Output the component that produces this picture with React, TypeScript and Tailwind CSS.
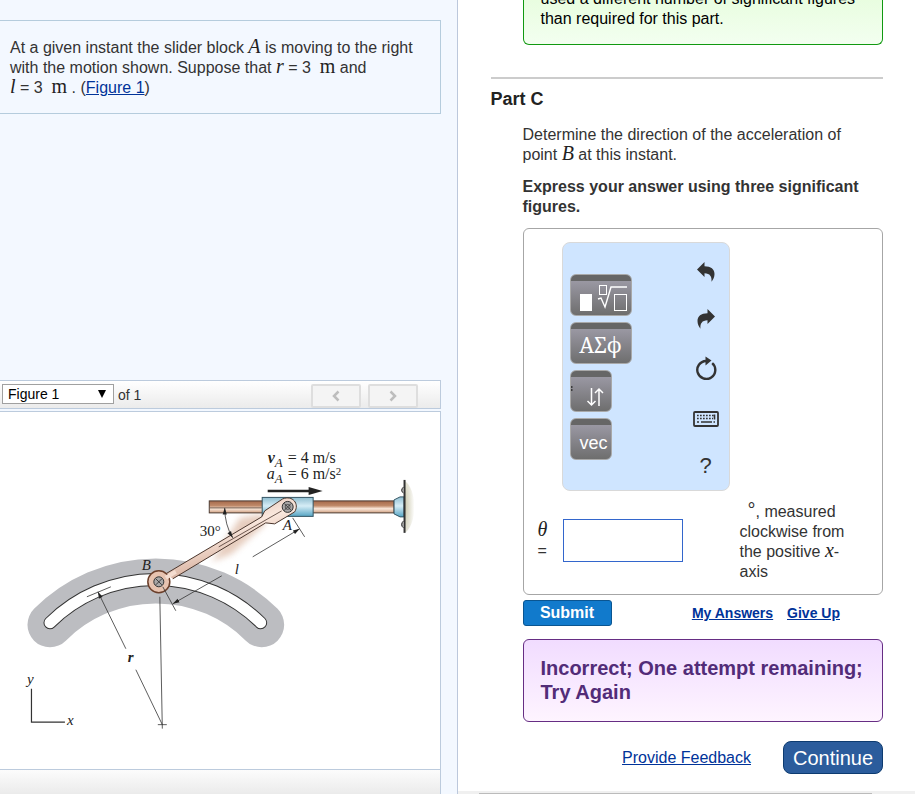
import type { ReactNode } from 'react';

interface MathProps {
  children: ReactNode;
  upright?: boolean;
}

const MathText = ({ children, upright = false }: MathProps) => (
  <span
    className={`font-['Liberation_Serif',serif] text-[20px] leading-[0] text-[#222] ${
      upright ? '' : 'italic'
    }`}
  >
    {children}
  </span>
);

const keyClass =
  'flex h-[42px] items-center justify-center rounded-md border border-[#a9a9a9] bg-[linear-gradient(to_bottom,#666_6px,#9a98a3_6px,#6e6e6e)] text-white';

const RootIcon = () => (
  <svg
    className="mt-2 ml-1 h-7 w-12"
    viewBox="0 0 48 28"
    fill="none"
    stroke="white"
    aria-hidden="true"
  >
    <rect x="1" y="9" width="12" height="17" fill="white" stroke="none" />
    <rect x="20.5" y="0.5" width="7" height="9" />
    <path d="M19 14l3-1 4 9 6-20h16" strokeWidth="1.4" />
    <rect x="35.5" y="9.5" width="12" height="16" />
  </svg>
);

const UndoIcon = ({ flipped = false }: { flipped?: boolean }) => (
  <svg
    className={`h-5 w-[18px] ${flipped ? '-scale-x-100' : ''}`}
    viewBox="0 0 18 20"
    fill="#333"
    aria-hidden="true"
  >
    <path d="M0 7.500 7.500 0v4.200c6.500 0 10 3 10 7.800 0 3-1.300 5.500-3 7.700.6-5-1.500-8.500-7-8.500V15z" />
  </svg>
);

const ResetIcon = () => (
  <svg className="h-6 w-[22px]" viewBox="0 0 22 24" fill="none" aria-hidden="true">
    <path d="M17.200 7.200a9 9 0 1 1-6.200-2.200" stroke="#333" strokeWidth="2.400" />
    <path d="M10.500 0.500 16.500 4.500 10.500 9.500z" fill="#333" />
  </svg>
);

const KeyboardIcon = () => (
  <svg className="h-4 w-[26px]" viewBox="0 0 26 16" fill="none" stroke="#333" aria-hidden="true">
    <rect x="1" y="1" width="24" height="14" rx="1" strokeWidth="1.800" />
    <path d="M4 4.500h18M4 7.500h16" strokeWidth="1.700" strokeDasharray="1.700 1.300" />
    <path d="M4 11h2M8 11h11M20.500 11H22M21.500 3.500v5" strokeWidth="1.600" />
  </svg>
);

const MechanismFigure = () => (
  <svg
    className="h-auto w-full max-w-[440px]"
    viewBox="0 412 440 357"
    role="img"
    aria-label="Slider block A joined to point B by link l"
    fontFamily="'Liberation Serif', serif"
    fontSize="15"
    fill="#222"
  >
    <defs>
      <linearGradient id="shaft" x1="0" y1="0" x2="0" y2="1">
        <stop offset="0" stopColor="#a5694a" />
        <stop offset="0.4" stopColor="#c08a69" />
        <stop offset="0.65" stopColor="#fbe9dc" />
        <stop offset="1" stopColor="#cf9f80" />
      </linearGradient>
      <linearGradient id="block" x1="0" y1="0" x2="0" y2="1">
        <stop offset="0" stopColor="#8fbdd0" />
        <stop offset="0.45" stopColor="#d6edf6" />
        <stop offset="1" stopColor="#56a5c4" />
      </linearGradient>
      <linearGradient id="link" x1="0" y1="0" x2="0.5" y2="1">
        <stop offset="0" stopColor="#cfa28e" />
        <stop offset="0.5" stopColor="#fae8de" />
        <stop offset="1" stopColor="#c99a84" />
      </linearGradient>
      <radialGradient id="wall" cx="0" cy="0.5" r="1">
        <stop offset="0" stopColor="#c9c6aa" />
        <stop offset="1" stopColor="#fff" />
      </radialGradient>
      <filter id="soft" x="-30%" y="-30%" width="160%" height="160%">
        <feGaussianBlur stdDeviation="3" />
      </filter>
      <marker
        id="arrow"
        viewBox="0 0 8 6"
        refX="8"
        refY="3"
        markerWidth="7"
        markerHeight="5"
        markerUnits="userSpaceOnUse"
        orient="auto-start-reverse"
      >
        <path d="M0 0.500 8 3 0 5.500z" fill="#222" />
      </marker>
    </defs>

    {/* slotted guide */}
    <path d="M50 625A150 150 0 0 1 262 625" fill="none" stroke="#bcbdc1" strokeWidth="45" strokeLinecap="round" />
    <path d="M50 623A150 150 0 0 1 261 623" fill="none" stroke="#333" strokeWidth="13" strokeLinecap="round" />
    <path d="M50 623A150 150 0 0 1 261 623" fill="none" stroke="#fff" strokeWidth="11" strokeLinecap="round" />

    {/* shaft, block and wall mount */}
    <path d="M240 518l22-4 4 10-34 30-20 8z" fill="#dcb7a2" opacity="0.700" filter="url(#soft)" />
    <rect x="209.500" y="501" width="185" height="12" fill="url(#shaft)" stroke="#4d3c33" />
    <path d="M210 508h52" stroke="#5b4436" strokeWidth="0.800" />
    <rect x="262.500" y="497.500" width="51" height="19" fill="url(#block)" stroke="#335563" />
    <path d="M405 481c6 3 10 15 10 26s-4 23-10 26z" fill="url(#wall)" />
    <path d="M394.500 500l6-3h4v20h-4l-6-3z" fill="url(#block)" stroke="#335563" />
    <path d="M405 480v53" stroke="#333" strokeWidth="2" />
    <path d="M404 487q-4 4 0 6M404 521q-4 4 0 7" fill="#999" stroke="#333" />

    {/* link */}
    <path
      d="M166 574 262 517l3-6 18-12c10-4 17 5 12 13l-20 12-9-1-93 56"
      fill="url(#link)"
      stroke="#49352c"
    />
    <path d="M219 547 282 511" stroke="#49352c" strokeWidth="0.800" />
    <circle cx="159" cy="582" r="11" fill="#e7c3b0" stroke="#6b3f2b" strokeWidth="1.500" />
    <path d="M166 578 176 572" stroke="#f4ddd0" strokeWidth="4" />
    <g fill="#a9a7a7" stroke="#333">
      <circle cx="159" cy="582" r="5" />
      <circle cx="288" cy="507" r="5.500" />
      <path d="M156 579l6 6M156 585l6-6M284.500 503.500l7 7M284.500 510.500l7-7" strokeWidth="0.900" />
      <circle cx="288" cy="507" r="2.500" fill="none" strokeWidth="0.700" />
    </g>

    {/* dimensions */}
    <g fill="none" stroke="#333" strokeWidth="0.800">
      <path d="M222 576 173 604" markerEnd="url(#arrow)" />
      <path d="M253 557 300 529" markerEnd="url(#arrow)" />
      <path d="M293 518l12 19M163 587l13 24" />
      <path d="M126 649 98 592" markerEnd="url(#arrow)" />
      <path d="M136 670 162.500 725M87 597l24-10M160 597l2.500 132M158 725h9" />
      <path d="M225 508q0 17 8 30" markerStart="url(#arrow)" markerEnd="url(#arrow)" />
      <path d="M31.500 689v33.500H65" strokeWidth="1.200" />
    </g>
    <path d="M268 491h44" stroke="#222" strokeWidth="2.500" />
    <path d="M309 487l14 4-14 4z" />

    <g fontSize="16">
      <text x="268" y="463">
        <tspan fontStyle="italic" fontWeight="bold">v</tspan>
        <tspan fontStyle="italic" fontSize="13" dy="4">A</tspan>
      </text>
      <text x="288" y="463">= 4 m/s</text>
      <text x="267" y="479">
        <tspan fontStyle="italic">a</tspan>
        <tspan fontStyle="italic" fontSize="13" dy="4">A</tspan>
      </text>
      <text x="288" y="479">
        = 6 m/s
        <tspan fontSize="11" dy="-4">2</tspan>
      </text>
    </g>
    <text x="200" y="536">30°</text>
    <g fontStyle="italic">
      <text x="283" y="530">A</text>
      <text x="142" y="570">B</text>
      <text x="235" y="574">l</text>
      <text x="128" y="662" fontWeight="bold">r</text>
      <text x="27" y="684">y</text>
      <text x="67" y="725">x</text>
    </g>
  </svg>
);

const FigurePanel = () => (
  <section>
    <div className="flex h-[29px] items-start border border-l-0 border-[#bccbdd] bg-linear-to-b from-white to-[#ebebeb] pt-[3px] pr-[22px] pl-[2px]">
      <div className="relative">
        <select
          aria-label="Figure"
          className="h-5 w-28 appearance-none border border-[#a0a0a0] bg-white pl-[5px] text-[14px] leading-4 text-black"
        >
          <option>Figure 1</option>
        </select>
        <svg className="pointer-events-none absolute top-[6px] right-2 h-2 w-2" viewBox="0 0 8 8" aria-hidden="true">
          <path d="M0 0h8L4 8z" fill="#000" />
        </svg>
      </div>
      <span className="ml-1 text-[14px] leading-[22px]">of 1</span>
      <div className="ml-auto flex gap-[7px]">
        {['Previous figure', 'Next figure'].map((label, index) => (
          <button
            key={label}
            aria-label={label}
            className="flex h-6 w-[50px] items-center justify-center rounded-[2px] border-2 border-[#dedede] bg-[#f4f4f4]"
          >
            <svg className="h-3 w-2" viewBox="0 0 8 12" fill="none" stroke="#bdbdbd" strokeWidth="2.500" aria-hidden="true">
              <path d={index === 0 ? 'M6.500 1.500 2 6l4.500 4.500' : 'M1.500 1.500 6 6l-4.500 4.500'} />
            </svg>
          </button>
        ))}
      </div>
    </div>
    <div className="mt-[2px] border-t border-r border-[#bccbdd] bg-white">
      <MechanismFigure />
      <div className="h-[25px] border-t border-[#bccbdd] bg-linear-to-b from-[#fcfcfc] to-[#ebebeb]" />
    </div>
  </section>
);

const MathToolbar = () => (
  <div className="flex justify-between rounded-lg border border-[#d9d9d9] bg-[#cfe5ff] pt-[31px] pr-[9px] pb-[30px] pl-[7px]">
    <div className="flex flex-col items-start gap-[6px]">
      <button aria-label="Templates" className={`${keyClass} w-[62px]`}>
        <RootIcon />
      </button>
      <button className={`${keyClass} w-[62px] pt-1 font-['Noto_Serif','Liberation_Serif',serif] text-[21px]`}>
        ΑΣϕ
      </button>
      <button aria-label="Arrows" className={`${keyClass} w-[42px]`}>
        <svg className="h-10 w-10" viewBox="0 0 40 40" fill="none" stroke="white" strokeWidth="1.500" aria-hidden="true">
          <path d="M20.500 17v17M16.500 30l4 4 4-4M28 35V18M24 22l4-4 4 4" />
          <path d="M0 16h1.500M0 19h1.500" stroke="#222" />
        </svg>
      </button>
      <button className={`${keyClass} w-[42px] pt-2 pl-[6px] text-[18px]`}>vec</button>
    </div>
    <div className="-mt-3 -mb-[18px] flex w-7 flex-col items-center justify-between">
      <button aria-label="Undo">
        <UndoIcon />
      </button>
      <button aria-label="Redo">
        <UndoIcon flipped />
      </button>
      <button aria-label="Reset">
        <ResetIcon />
      </button>
      <button aria-label="Keyboard shortcuts" className="pt-1">
        <KeyboardIcon />
      </button>
      <button aria-label="Help" className="text-[22px] leading-6 text-[#333]">
        ?
      </button>
    </div>
  </div>
);

const AnswerBox = () => (
  <div className="mt-[11px] grid grid-cols-[38px_168px_1fr] rounded-md border border-[#a6a6a6] pt-[13px] pb-3">
    <div className="col-start-2">
      <MathToolbar />
    </div>
    <label htmlFor="theta" className="col-start-1 mt-[30px] pl-[14px]">
      <MathText>θ</MathText>
      <span className="block">=</span>
    </label>
    <div className="mt-7 pl-px">
      <input id="theta" className="block h-[43px] w-[120px] border border-[#3366cc] bg-white px-2" />
    </div>
    <p className="mt-[11px] pr-4 pl-[10px]">
      <span className="pl-2 text-[20px] leading-[0]">°</span>, measured clockwise from the positive{' '}
      <MathText>x</MathText>-axis
    </p>
  </div>
);

function App() {
  return (
    <div className="grid h-screen grid-cols-2 overflow-hidden bg-white font-['Liberation_Sans',Arial,sans-serif] text-[16px] leading-5 text-[#333]">
      {/* PROBLEM AND FIGURE */}
      <div className="flex flex-col justify-between border-r border-[#bcc8dc] bg-[#f3f8ff] pt-5 pr-4">
        <section className="border border-l-0 border-[#b5ccdd] pt-[17px] pr-3 pb-[15px] pl-[10px]">
          <p>
            At a given instant the slider block <MathText>A</MathText> is moving to the right with
            the motion shown. Suppose that <MathText>r</MathText> = 3 &nbsp;
            <MathText upright>m</MathText> and <br />
            <MathText>l</MathText> = 3 &nbsp;<MathText upright>m</MathText> . (
            <a href="#figure" className="text-[#003399] underline">
              Figure 1
            </a>
            )
          </p>
        </section>
        <FigurePanel />
      </div>

      {/* PART C */}
      <main className="flex flex-col overflow-hidden">
        <div className="pr-8 pl-[33px]">
          <div className="-mt-[11px] ml-8 rounded-b-md border border-t-0 border-[#119911] bg-linear-to-b from-[#e6fddc] to-[#f3fff0] px-[17px] pb-[15px] text-black">
            used a different number of significant figures than required for this part.
          </div>
          <hr className="mt-8 border-t-2 border-[#ccc]" />
          <h2 className="mt-[10px] text-[18px] font-bold text-[#222]">Part C</h2>

          <div className="mt-4 pl-8">
            <p className="pr-4">
              Determine the direction of the acceleration of point <MathText>B</MathText> at this
              instant.
            </p>
            <p className="mt-3 font-bold">Express your answer using three significant figures.</p>
            <AnswerBox />

            <div className="mt-[5px] flex items-center">
              <button className="h-[26px] w-[89px] rounded-[3px] border border-[#0a5591] bg-[#117acc] font-bold text-white">
                Submit
              </button>
              <div className="mr-[43px] ml-auto flex gap-[14px] text-[14px] font-bold text-[#003399] underline">
                <a href="#answers">My Answers</a>
                <a href="#give-up">Give Up</a>
              </div>
            </div>

            <div className="mt-[13px] rounded-md border border-[#662d84] bg-linear-to-b from-[#f1dcff] to-[#fef4ff] px-[17px] pt-4 pb-[17px] text-[20px] leading-6 font-bold text-[#522c78]">
              Incorrect; One attempt remaining; Try Again
            </div>

            <div className="mt-[19px] flex items-center justify-end gap-8">
              <a href="#feedback" className="text-[#003399] underline">
                Provide Feedback
              </a>
              <button className="h-[33px] w-[100px] rounded-lg border border-[#0d3b70] bg-[#2b5c9c] text-[20px] text-white">
                Continue
              </button>
            </div>
          </div>
        </div>
        <div className="mt-auto h-[3px] shrink-0 bg-[#f0f0f0] pt-[2px] pr-[43px] pl-[21px]">
          <div className="h-px bg-[#bbb]" />
        </div>
      </main>
    </div>
  );
}

export default App;
